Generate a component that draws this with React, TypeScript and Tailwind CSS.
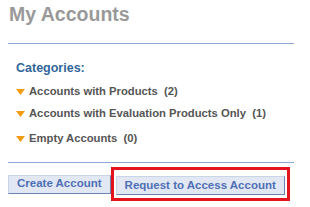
const items = [
  { label: "Accounts with Products", count: 2 },
  { label: "Accounts with Evaluation Products Only", count: 1 },
  { label: "Empty Accounts", count: 0 },
];

function Arrow() {
  return (
    <svg width="9" height="6" viewBox="0 0 9 6" className="shrink-0">
      <path d="M0 0H9L4.5 6Z" fill="#f39c12" />
    </svg>
  );
}

export default function App() {
  return (
    <div className="w-[310px] h-[207px] bg-white pl-2 pr-4 pt-[3px] font-['Liberation_Sans',Arial,sans-serif]">
      <h1 className="text-[19.5px] leading-[22px] font-bold text-[#999999] pl-px">My Accounts</h1>
      <div className="mt-[18px] h-px bg-[#8eaad4]" />
      <div className="pl-2 pt-[17px]">
        <h2 className="text-[12.5px] leading-[14px] font-bold text-[#336699]">Categories:</h2>
        <ul className="mt-[10px] flex flex-col">
          {items.map((it, i) => (
            <li
              key={it.label}
              className={`flex h-[13px] items-center gap-[4px] text-[11.25px] leading-[13px] font-bold text-[#555555] ${i === 0 ? "" : i === 1 ? "mt-[9px]" : "mt-[12px]"}`}
            >
              <Arrow />
              <span className="whitespace-pre">{`${it.label}  (${it.count})`}</span>
            </li>
          ))}
        </ul>
      </div>
      <div className="mt-[17px] h-px bg-[#8eaad4]" />
      <div className="mt-[4px] flex items-center">
        <button className="h-[19px] px-[8px] bg-[#e1e8f3] border border-t-[#c9d4e6] border-l-[#c9d4e6] border-r-[#6f84b0] border-b-[#6f84b0] text-[11.5px] font-bold text-[#4f6fb5] leading-none">
          Create Account
        </button>
        <div className="border-[3px] border-[#e3141d] p-[2px]">
          <button className="h-[19px] px-[8px] bg-[#e1e8f3] border border-t-[#c9d4e6] border-l-[#c9d4e6] border-r-[#6f84b0] border-b-[#6f84b0] text-[11.5px] font-bold text-[#4f6fb5] leading-none">
            Request to Access Account
          </button>
        </div>
      </div>
    </div>
  );
}
